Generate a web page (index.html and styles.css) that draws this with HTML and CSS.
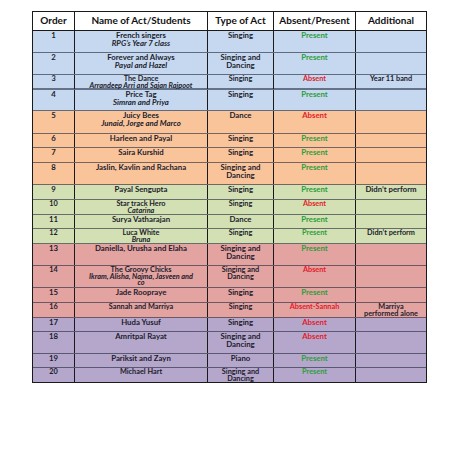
FILE: index.html
```html
<!DOCTYPE html>
<html>
<head>
<meta charset="utf-8">
<link rel="stylesheet" href="styles.css">
</head>
<body>
<div class="table">
  <div class="row head h19"><div>Order</div><div>Name of Act/Students</div><div>Type of Act</div><div>Absent/Present</div><div>Additional</div></div>

  <div class="row blue h22"><div>1</div><div>French singers<br><i>RPG’s Year 7 class</i></div><div>Singing</div><div class="p">Present</div><div></div></div>
  <div class="row blue h22"><div>2</div><div>Forever and Always<br><i>Payal and Hazel</i></div><div>Singing and Dancing</div><div class="p">Present</div><div></div></div>
  <div class="row blue h15 thick tight"><div>3</div><div>The Dance<br><i>Arrandeep Arri and Sajan Rajpoot</i></div><div>Singing</div><div class="a">Absent</div><div>Year 11 band</div></div>
  <div class="row blue h21"><div>4</div><div>Price Tag<br><i>Simran and Priya</i></div><div>Singing</div><div class="p">Present</div><div></div></div>

  <div class="row orange h23"><div>5</div><div>Juicy Bees<br><i>Junaid, Jorge and Marco</i></div><div>Dance</div><div class="a">Absent</div><div></div></div>
  <div class="row orange h14"><div>6</div><div>Harleen and Payal</div><div>Singing</div><div class="p">Present</div><div></div></div>
  <div class="row orange h15"><div>7</div><div>Saira Kurshid</div><div>Singing</div><div class="p">Present</div><div></div></div>
  <div class="row orange h22"><div>8</div><div>Jaslin, Kavlin and Rachana</div><div>Singing and Dancing</div><div class="p">Present</div><div></div></div>

  <div class="row green h15"><div>9</div><div>Payal Sengupta</div><div>Singing</div><div class="p">Present</div><div>Didn’t perform</div></div>
  <div class="row green h15 tight"><div>10</div><div>Star track Hero<br><i>Catarina</i></div><div>Singing</div><div class="a">Absent</div><div></div></div>
  <div class="row green h14"><div>11</div><div>Surya Vatharajan</div><div>Dance</div><div class="p">Present</div><div></div></div>
  <div class="row green h15 tight"><div>12</div><div>Luca White<br><i>Bruna</i></div><div>Singing</div><div class="p">Present</div><div>Didn’t perform</div></div>

  <div class="row red h22"><div>13</div><div>Daniella, Urusha and Elaha</div><div>Singing and Dancing</div><div class="p">Present</div><div></div></div>
  <div class="row red h22 tight"><div>14</div><div>The Groovy Chicks<br><i>Ikram, Alisha, Najma, Jasveen and<br>co</i></div><div>Singing and Dancing</div><div class="a">Absent</div><div></div></div>
  <div class="row red h15"><div>15</div><div>Jade Roopraye</div><div>Singing</div><div class="p">Present</div><div></div></div>
  <div class="row red h15 tight"><div>16</div><div>Sannah and Marriya</div><div>Singing</div><div class="a">Absent-Sannah</div><div>Marriya<br>performed alone</div></div>

  <div class="row purple h14"><div>17</div><div>Huda Yusuf</div><div>Singing</div><div class="a">Absent</div><div></div></div>
  <div class="row purple h22"><div>18</div><div>Amritpal Rayat</div><div>Singing and Dancing</div><div class="a">Absent</div><div></div></div>
  <div class="row purple h14"><div>19</div><div>Pariksit and Zayn</div><div>Piano</div><div class="p">Present</div><div></div></div>
  <div class="row purple h14 last tight"><div>20</div><div>Michael Hart</div><div>Singing and Dancing</div><div class="p">Present</div><div></div></div>
</div>
</body>
</html>
```
FILE: styles.css
```css
html, body {
  margin: 0;
  padding: 0;
  background: #ffffff;
}
body {
  padding: 11px 0 0 32px;
  font-family: Lato, "Liberation Sans", sans-serif;
  font-weight: 700;
  color: #1c1c2c;
}
.table {
  width: 393px;
  border: 1px solid #1a1a1a;
}
.row {
  display: grid;
  grid-template-columns: 42px 133px 66px 82px 70px;
  box-sizing: border-box;
  border-bottom: 1.5px solid rgba(35, 40, 60, 0.62);
  font-size: 7.8px;
  line-height: 7.8px;
}
.row > div {
  border-right: 1px solid #1a1a1a;
  text-align: center;
  padding: 1px 1px 0;
}
.row > div:last-child {
  border-right: none;
}
.row > div:nth-child(3) {
  padding: 1px 8px 0;
}
.row.tight {
  font-size: 7.3px;
  line-height: 6.6px;
}
.row.tight > div {
  padding-top: 1px;
}
.row i {
  font-style: italic;
}
.head {
  background: #ffffff;
  font-size: 10px;
  line-height: 12px;
  color: #111;
  border-bottom: 1px solid #1a1a1a;
}
.head > div {
  padding-top: 2px;
}
.head > div:nth-child(3) {
  padding: 2px 0 0;
}
.blue { background: #c5d8ef; }
.orange { background: #fac49b; }
.green { background: #d2e0b3; }
.red { background: #e3a3a1; }
.purple { background: #b5a7cb; }
.thick { border-bottom: 2.5px solid rgba(70, 80, 100, 0.75); }
.last { border-bottom: none; }
.p { color: #2c9e3c; }
.a { color: #e3202a; }
.h14 { height: 14px; }
.h15 { height: 15px; }
.h19 { height: 19px; }
.h21 { height: 21px; }
.h22 { height: 22px; }
.h23 { height: 23px; }
```
